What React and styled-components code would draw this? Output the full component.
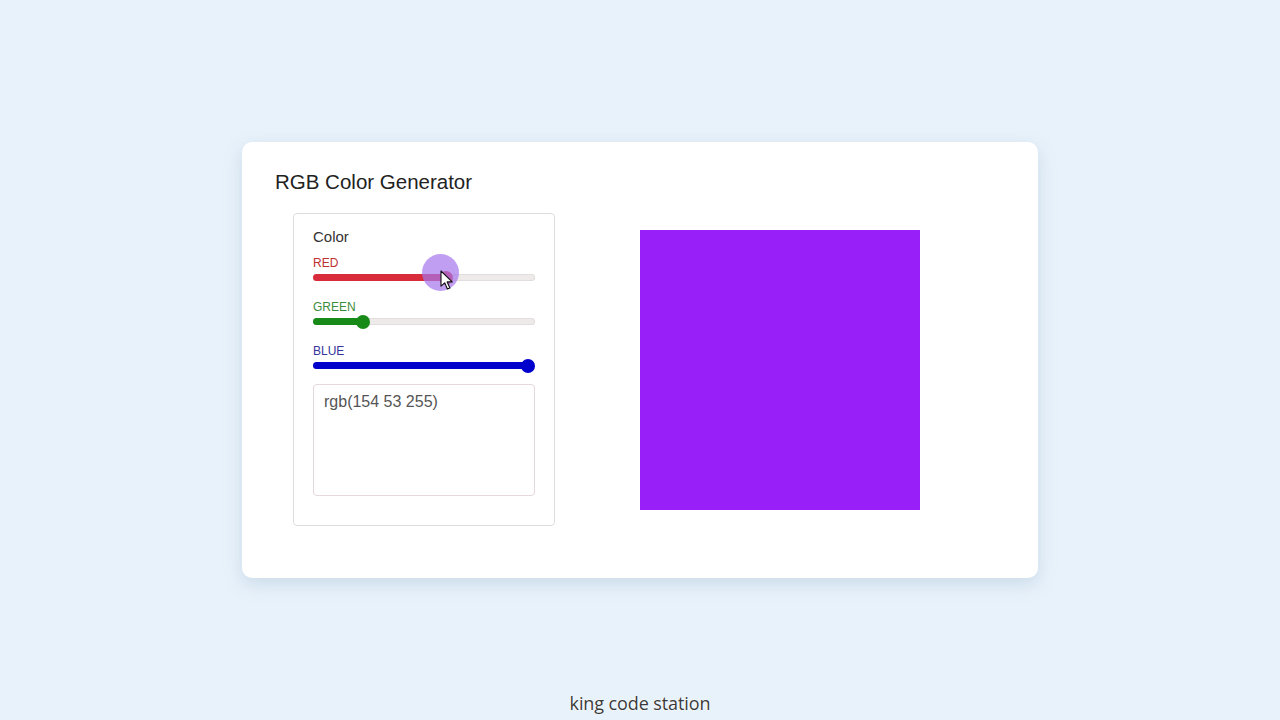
import React from "react";
import styled, { createGlobalStyle } from "styled-components";

const Global = createGlobalStyle`
  html, body { margin: 0; padding: 0; }
  body {
    background: #e8f2fb;
    font-family: "Liberation Sans", Arial, sans-serif;
    width: 1280px;
    height: 720px;
    overflow: hidden;
  }
`;

const Page = styled.div`
  position: relative;
  width: 1280px;
  height: 720px;
  box-sizing: border-box;
  padding-top: 142px;
  display: flex;
  flex-direction: column;
  align-items: center;
`;

const Card = styled.div`
  width: 796px;
  height: 436px;
  box-sizing: border-box;
  background: #ffffff;
  border-radius: 10px;
  box-shadow: 0 6px 18px rgba(120, 150, 180, 0.25);
  padding: 28px 33px 0 33px;
  display: flex;
  flex-direction: column;
`;

const Title = styled.h1`
  margin: 0;
  font-size: 20.5px;
  font-weight: 400;
  line-height: 24px;
  color: #222;
`;

const Row = styled.div`
  display: flex;
  align-items: center;
  margin-top: 19px;
  padding-left: 18px;
`;

const Panel = styled.div`
  width: 262px;
  height: 313px;
  box-sizing: border-box;
  border: 1px solid #e0dcdc;
  border-radius: 4px;
  padding: 14px 19px 0 19px;
  display: flex;
  flex-direction: column;
`;

const PanelTitle = styled.div`
  font-size: 15px;
  line-height: 18px;
  color: #333;
  margin-bottom: 10px;
`;

const SliderBlock = styled.div`
  display: flex;
  flex-direction: column;
  height: 44px;
  &:last-of-type {
    height: 40px;
  }
`;

const Label = styled.div`
  font-size: 12px;
  line-height: 14px;
  color: ${(p) => p.$color};
`;

const Track = styled.div`
  position: relative;
  margin-top: 4px;
  width: 222px;
  height: 7px;
  border-radius: 4px;
  background: #eeeaea;
  box-shadow: inset 0 0 0 1px #e2dede;
`;

const Fill = styled.div`
  position: absolute;
  left: 0;
  top: 0;
  height: 7px;
  border-radius: 4px;
  background: ${(p) => p.$color};
`;

const Thumb = styled.div`
  position: absolute;
  top: 50%;
  width: 14px;
  height: 14px;
  margin-left: -7px;
  margin-top: -7px;
  border-radius: 50%;
  background: ${(p) => p.$color};
`;

const Halo = styled.div`
  position: absolute;
  top: 50%;
  width: 37px;
  height: 37px;
  margin-left: -18px;
  margin-top: -24px;
  border-radius: 50%;
  background: rgba(165, 118, 238, 0.7);
`;

const Cursor = styled.svg`
  position: absolute;
  top: -4px;
  width: 13px;
  height: 20px;
`;

const Output = styled.textarea`
  display: block;
  width: 222px;
  height: 112px;
  box-sizing: border-box;
  border: 1px solid #e4d8dc;
  border-radius: 4px;
  padding: 8px 10px;
  font-family: "Liberation Sans", Arial, sans-serif;
  font-size: 16px;
  line-height: 18px;
  color: #555;
  resize: none;
  outline: none;
`;

const PreviewArea = styled.div`
  flex: 1;
  display: flex;
  justify-content: center;
  align-items: center;
`;

const Swatch = styled.div`
  width: 280px;
  height: 280px;
  background: ${(p) => p.$color};
`;

const Watermark = styled.div`
  position: absolute;
  left: 0;
  right: 0;
  bottom: 5px;
  text-align: center;
  font-family: "Open Sans", "Noto Sans", sans-serif;
  font-size: 18px;
  letter-spacing: -0.1px;
  color: #3a3a3a;
  text-shadow: 0 0 2px #fff, 0 0 1px #fff;
`;

const THUMB = 14;
const TRACK = 222;

function Slider({ label, labelColor, color, value, hover }) {
  const pos = (value / 255) * (TRACK - THUMB) + THUMB / 2;
  const haloPos = pos - 6;
  const cursorPos = pos - 5.5;
  return (
    <SliderBlock>
      <Label $color={labelColor}>{label}</Label>
      <Track>
        <Fill $color={color} style={{ width: `${pos}px` }} />
        <Thumb $color={color} style={{ left: `${pos}px` }} />
        {hover && <Halo style={{ left: `${haloPos}px` }} />}
        {hover && (
          <Cursor viewBox="0 0 13 20" style={{ left: `${cursorPos}px` }}>
            <path
              d="M1 1 L1 16.2 L4.7 12.8 L7.4 19 L9.9 17.9 L7.2 11.9 L12.2 11.9 Z"
              fill="#fff"
              stroke="#111"
              strokeWidth="1.1"
              strokeLinejoin="round"
            />
          </Cursor>
        )}
      </Track>
    </SliderBlock>
  );
}

export default function App() {
  const r = 154;
  const g = 53;
  const b = 255;
  return (
    <>
      <Global />
      <Page>
        <Card>
          <Title>RGB Color Generator</Title>
          <Row>
            <Panel>
              <PanelTitle>Color</PanelTitle>
              <Slider label="RED" labelColor="#c0302f" color="#d82c3a" value={r} hover />
              <Slider label="GREEN" labelColor="#3c8d3c" color="#178a17" value={g} />
              <Slider label="BLUE" labelColor="#34349a" color="#0000cc" value={b} />
              <Output readOnly value={`rgb(${r} ${g} ${b})`} />
            </Panel>
            <PreviewArea>
              <Swatch $color="#991ff8" />
            </PreviewArea>
          </Row>
        </Card>
        <Watermark>king code station</Watermark>
      </Page>
    </>
  );
}
